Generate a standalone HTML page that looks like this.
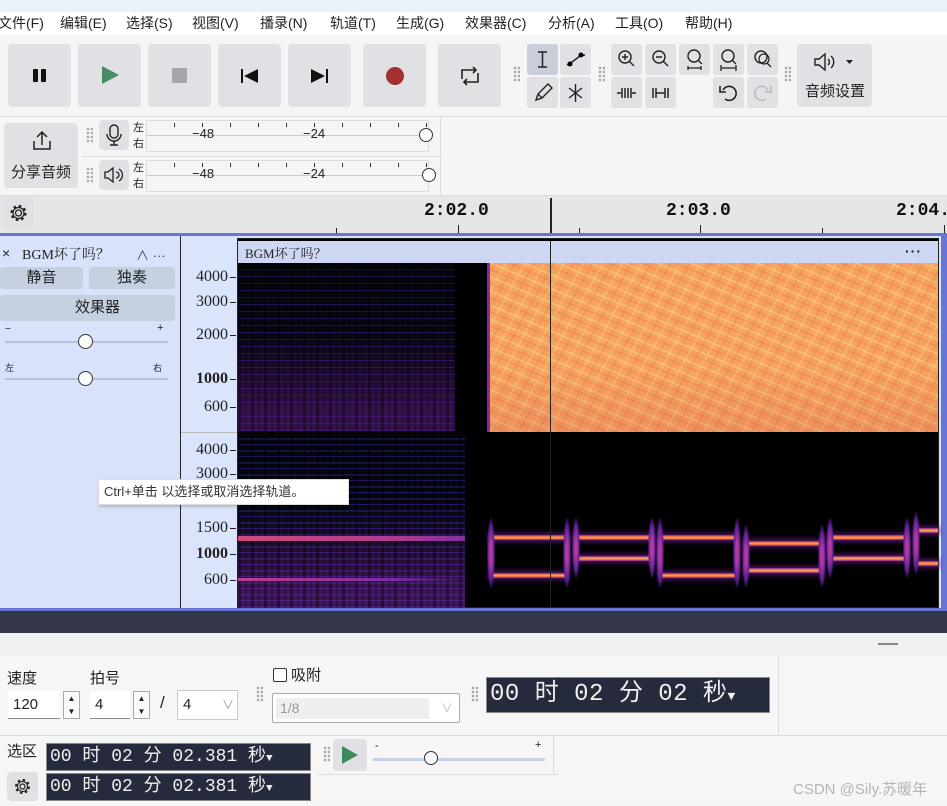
<!DOCTYPE html>
<html><head><meta charset="utf-8">
<style>
*{margin:0;padding:0;box-sizing:border-box}
body{width:947px;height:803px;overflow:hidden;background:#f5f5f5;font-family:"Liberation Sans","Noto Sans CJK SC",sans-serif;position:relative;color:#222}
.a{position:absolute}
.btn{position:absolute;background:#e1e1e5;border-radius:4px}
.sb{position:absolute;background:#e1e1e5;border-radius:3px;width:31px;height:31px}
.grip{position:absolute;width:7px;height:16px;background-image:radial-gradient(circle,#aaa 1.2px,transparent 1.5px);background-size:4px 4px}
.rl{position:absolute;right:10px;font-family:"Liberation Serif","DejaVu Serif",serif;font-size:16px;color:#222}
.rl::after{content:"";position:absolute;right:-8px;top:50%;width:6px;height:1px;background:#222}
.tl{position:absolute;font-family:"Liberation Mono","DejaVu Sans Mono",monospace;font-weight:bold;font-size:18px;color:#111}
.td{position:absolute;background:#262a3d;border:1px solid #888;color:#f0f0f0;font-family:"Liberation Mono","Noto Sans CJK SC",monospace;white-space:nowrap;overflow:hidden}
.bar{position:absolute;height:5px;background:linear-gradient(#7b2ca0,#f26b3a 30%,#fbb86a 50%,#f26b3a 70%,#7b2ca0);box-shadow:0 0 5px 2px rgba(110,30,150,.7)}
.cap{position:absolute;width:8px;background:radial-gradient(ellipse,#b53aa0 20%,#5a1f90 55%,transparent 75%)}
</style></head><body>
<div class="a" style="left:0;top:0;width:947px;height:12px;background:#eaf2f7"></div>
<div class="a" style="left:0;top:12px;width:947px;height:23px;background:#fff;font-size:14px;line-height:23px;white-space:nowrap">
<span class="a" style="left:-2px">文件(F)</span><span class="a" style="left:60px">编辑(E)</span><span class="a" style="left:126px">选择(S)</span><span class="a" style="left:192px">视图(V)</span><span class="a" style="left:260px">播录(N)</span><span class="a" style="left:330px">轨道(T)</span><span class="a" style="left:396px">生成(G)</span><span class="a" style="left:465px">效果器(C)</span><span class="a" style="left:548px">分析(A)</span><span class="a" style="left:615px">工具(O)</span><span class="a" style="left:685px">帮助(H)</span></div>

<div class="btn" style="left:8px;top:44px;width:63px;height:63px"><div class="a" style="left:25px;top:25px;width:5px;height:13px;background:#111;border-radius:1px"></div><div class="a" style="left:33px;top:25px;width:5px;height:13px;background:#111;border-radius:1px"></div></div>
<div class="btn" style="left:78px;top:44px;width:63px;height:63px"><div class="a" style="left:24px;top:22px;border-left:17px solid #4a8a64;border-top:9px solid transparent;border-bottom:9px solid transparent"></div></div>
<div class="btn" style="left:148px;top:44px;width:63px;height:63px"><div class="a" style="left:24px;top:24px;width:15px;height:15px;background:#a5a7ae"></div></div>
<div class="btn" style="left:218px;top:44px;width:63px;height:63px"><div class="a" style="left:23px;top:25px;width:2px;height:14px;background:#111"></div><div class="a" style="left:26px;top:25px;border-right:14px solid #111;border-top:7px solid transparent;border-bottom:7px solid transparent"></div></div>
<div class="btn" style="left:288px;top:44px;width:63px;height:63px"><div class="a" style="left:23px;top:25px;border-left:14px solid #111;border-top:7px solid transparent;border-bottom:7px solid transparent"></div><div class="a" style="left:38px;top:25px;width:2px;height:14px;background:#111"></div></div>
<div class="btn" style="left:363px;top:44px;width:63px;height:63px"><div class="a" style="left:23px;top:23px;width:18px;height:18px;border-radius:50%;background:#a3302f"></div></div>
<div class="btn" style="left:438px;top:44px;width:63px;height:63px"><svg class="a" style="left:21px;top:21px" width="22" height="22" viewBox="0 0 22 22" fill="none" stroke="#222" stroke-width="1.6"><path d="M3 14V5h14M14 2l3 3-3 3M19 8v9H5M8 20l-3-3 3-3"/></svg></div>
<div class="grip" style="left:513px;top:66px"></div>
<div class="sb" style="left:527px;top:44px;background:#c9ceda"><svg width="31" height="31"><path d="M11 8h9M11 23h9M15.5 8v15" stroke="#222" stroke-width="1.5"/></svg></div>
<div class="sb" style="left:560px;top:44px"><svg width="31" height="31"><path d="M7 21l5-3 8-6 5-1" stroke="#222" stroke-width="1.5" fill="none"/><circle cx="10" cy="20" r="2.5"/><circle cx="21" cy="11" r="2.5"/></svg></div>
<div class="sb" style="left:527px;top:77px"><svg width="31" height="31"><path d="M9 23l2-6 10-10 4 4-10 10z M11 17l4 4" stroke="#222" stroke-width="1.4" fill="none"/></svg></div>
<div class="sb" style="left:560px;top:77px"><svg width="31" height="31"><path d="M15.5 7v18M9 11l13 10M22 11L9 21" stroke="#222" stroke-width="1.4"/></svg></div>
<div class="grip" style="left:598px;top:66px"></div>
<div class="sb" style="left:611px;top:44px"><svg width="31" height="31"><circle cx="14" cy="13" r="6" stroke="#222" stroke-width="1.4" fill="none"/><path d="M18 17l5 5M11 13h6M14 10v6" stroke="#222" stroke-width="1.4"/></svg></div>
<div class="sb" style="left:645px;top:44px"><svg width="31" height="31"><circle cx="14" cy="13" r="6" stroke="#222" stroke-width="1.4" fill="none"/><path d="M18 17l5 5M11 13h6" stroke="#222" stroke-width="1.4"/></svg></div>
<div class="sb" style="left:679px;top:44px"><svg width="31" height="31"><circle cx="15" cy="12" r="6" stroke="#222" stroke-width="1.4" fill="none"/><path d="M19 16l4 4M9 24h13M9 22v4M22 22v4" stroke="#222" stroke-width="1.3"/></svg></div>
<div class="sb" style="left:713px;top:44px"><svg width="31" height="31"><circle cx="15" cy="12" r="6" stroke="#222" stroke-width="1.4" fill="none"/><path d="M19 16l4 4M8 24h15M8 21v6M23 21v6" stroke="#222" stroke-width="1.3"/></svg></div>
<div class="sb" style="left:747px;top:44px"><svg width="31" height="31"><circle cx="14" cy="13" r="6" stroke="#222" stroke-width="1.4" fill="none"/><circle cx="17" cy="15" r="5" stroke="#222" stroke-width="1.2" fill="none"/><path d="M20 19l4 4" stroke="#222" stroke-width="1.4"/></svg></div>
<div class="sb" style="left:611px;top:77px"><svg width="31" height="31"><path d="M6 16h4M21 16h4M11 11v10M14 11v10M17 11v10M20 11v10" stroke="#222" stroke-width="1.5"/></svg></div>
<div class="sb" style="left:645px;top:77px"><svg width="31" height="31"><path d="M8 11v10M11 11v10M20 11v10M23 11v10M11 16h9" stroke="#222" stroke-width="1.5"/></svg></div>
<div class="sb" style="left:713px;top:77px"><svg width="31" height="31"><path d="M10 13a7 7 0 1 1 2 9" stroke="#222" stroke-width="1.6" fill="none"/><path d="M7 9v6h6" stroke="#222" stroke-width="1.6" fill="none"/></svg></div>
<div class="sb" style="left:747px;top:77px"><svg width="31" height="31"><path d="M21 13a7 7 0 1 0-2 9" stroke="#bbb" stroke-width="1.6" fill="none"/><path d="M24 9v6h-6" stroke="#bbb" stroke-width="1.6" fill="none"/></svg></div>
<div class="grip" style="left:784px;top:66px"></div>
<div class="btn" style="left:797px;top:44px;width:75px;height:63px"><svg class="a" style="left:15px;top:8px" width="45" height="20"><path d="M3 7h4l6-5v16l-6-5H3z" stroke="#222" stroke-width="1.4" fill="none"/><path d="M16 7a4 4 0 0 1 0 6M19 4a8 8 0 0 1 0 12" stroke="#222" stroke-width="1.4" fill="none"/><path d="M34 8h7l-3.5 4z" fill="#222"/></svg><div class="a" style="left:8px;top:36px;font-size:15px">音频设置</div></div>
<div class="a" style="left:0;top:116px;width:947px;height:1px;background:#ddd"></div>

<div class="btn" style="left:4px;top:123px;width:74px;height:65px"><svg class="a" style="left:26px;top:6px" width="24" height="24"><path d="M4 12v8h16v-8M12 3v13M7 8l5-5 5 5" stroke="#222" stroke-width="1.5" fill="none"/></svg><div class="a" style="left:7px;top:38px;font-size:15px">分享音频</div></div>
<div class="grip" style="left:86px;top:127px"></div><div class="grip" style="left:86px;top:167px"></div>
<div class="btn" style="left:99px;top:120px;width:30px;height:30px"><svg width="30" height="30"><rect x="11" y="5" width="8" height="13" rx="4" stroke="#222" stroke-width="1.4" fill="none"/><path d="M8 14a7 7 0 0 0 14 0M15 21v4M11 25h8" stroke="#222" stroke-width="1.4" fill="none"/></svg></div>
<div class="btn" style="left:99px;top:160px;width:30px;height:30px"><svg width="30" height="30"><path d="M6 12h3l5-4v14l-5-4H6z" stroke="#222" stroke-width="1.3" fill="none"/><path d="M17 12a3 3 0 0 1 0 6M20 9a7 7 0 0 1 0 12" stroke="#222" stroke-width="1.3" fill="none"/></svg></div>
<div class="a" style="left:133px;top:120px;font-size:11px;line-height:16px">左<br>右</div>
<div class="a" style="left:133px;top:160px;font-size:11px;line-height:16px">左<br>右</div>
<div class="a" style="left:146px;top:120px;width:283px;height:32px;border:1px solid #ddd"></div>
<div class="a" style="left:146px;top:160px;width:283px;height:32px;border:1px solid #ddd"></div>
<div class="a" style="left:147px;top:135px;width:282px;height:1px;background:#ccc"></div>
<div class="a" style="left:147px;top:175px;width:282px;height:1px;background:#ccc"></div>
<div class="a" style="left:147px;top:123px;width:280px;height:4px;background:repeating-linear-gradient(90deg,transparent 0 27px,#333 27px 28px)"></div>
<div class="a" style="left:147px;top:163px;width:280px;height:4px;background:repeating-linear-gradient(90deg,transparent 0 27px,#333 27px 28px)"></div>
<div class="a" style="left:192px;top:126px;font-size:13px">−48</div><div class="a" style="left:303px;top:126px;font-size:13px">−24</div>
<div class="a" style="left:192px;top:166px;font-size:13px">−48</div><div class="a" style="left:303px;top:166px;font-size:13px">−24</div>
<div class="a" style="left:419px;top:128px;width:14px;height:14px;border:1.5px solid #333;border-radius:50%;background:#fff"></div>
<div class="a" style="left:422px;top:168px;width:14px;height:14px;border:1.5px solid #333;border-radius:50%;background:#fff"></div>
<div class="a" style="left:82px;top:156px;width:360px;height:1px;background:#ddd"></div>
<div class="a" style="left:440px;top:117px;width:1px;height:78px;background:#ddd"></div>
<div class="a" style="left:0;top:195px;width:947px;height:1px;background:#ddd"></div>

<div class="a" style="left:0;top:196px;width:947px;height:37px;background:#e6e6e6"></div>
<div class="btn" style="left:3px;top:197px;width:31px;height:32px"><svg width="31" height="32"><circle cx="15.5" cy="16" r="3" stroke="#222" stroke-width="1.3" fill="none"/><circle cx="15.5" cy="16" r="7" stroke="#222" stroke-width="2.2" stroke-dasharray="2.7 2.8" fill="none"/><circle cx="15.5" cy="16" r="5.5" stroke="#222" stroke-width="1.2" fill="none"/></svg></div>
<div class="tl" style="left:424px;top:201px">2:02.0</div>
<div class="tl" style="left:666px;top:201px">2:03.0</div>
<div class="tl" style="left:896px;top:201px">2:04.</div>
<div class="a" style="left:336px;top:228px;width:1px;height:5px;background:#222"></div>
<div class="a" style="left:458px;top:225px;width:1px;height:8px;background:#222"></div>
<div class="a" style="left:579px;top:228px;width:1px;height:5px;background:#222"></div>
<div class="a" style="left:700px;top:225px;width:1px;height:8px;background:#222"></div>
<div class="a" style="left:822px;top:228px;width:1px;height:5px;background:#222"></div>
<div class="a" style="left:944px;top:225px;width:1px;height:8px;background:#222"></div>
<div class="a" style="left:550px;top:198px;width:2px;height:35px;background:#222"></div>

<div class="a" style="left:0;top:233px;width:947px;height:378px;background:#6675d6"></div>
<div class="a" style="left:0;top:236px;width:941px;height:372px;background:#d8e3fb"></div>
<div class="a" style="left:180px;top:236px;width:1px;height:372px;background:#222"></div>
<div class="a" style="left:181px;top:236px;width:57px;height:372px;background:#dae4fa"></div>
<div class="a" style="left:181px;top:432px;width:57px;height:1px;background:#bbb"></div>
<div class="a" style="left:237px;top:238px;width:702px;height:370px;background:#000;border:1px solid #222"></div>
<div class="a" style="left:238px;top:241px;width:700px;height:22px;background:#cdd6f2"></div>
<div class="a" style="left:245px;top:243px;font-family:'Liberation Serif','Noto Serif CJK SC',serif;font-size:13px">BGM坏了吗？</div>
<div class="a" style="left:905px;top:243px;font-size:14px;font-weight:bold;letter-spacing:1px">···</div>

<div class="a" style="left:2px;top:245px;font-size:14px">×</div>
<div class="a" style="left:22px;top:244px;font-family:'Liberation Serif','Noto Serif CJK SC',serif;font-size:14px">BGM坏了吗？</div>
<div class="a" style="left:136px;top:245px;font-size:13px;color:#444">∧ ···</div>
<div class="a" style="left:0;top:267px;width:83px;height:22px;background:#c5d0e0;border-radius:3px;text-align:center;font-size:15px;line-height:22px">静音</div>
<div class="a" style="left:89px;top:267px;width:86px;height:22px;background:#c5d0e0;border-radius:3px;text-align:center;font-size:15px;line-height:22px">独奏</div>
<div class="a" style="left:0;top:295px;width:175px;height:26px;background:#c5d0e0;border-radius:3px;text-align:center;font-size:15px;line-height:26px;padding-left:20px">效果器</div>
<div class="a" style="left:5px;top:324px;font-size:10px">−</div><div class="a" style="left:157px;top:322px;font-size:11px">+</div>
<div class="a" style="left:5px;top:341px;width:163px;height:2px;background:#b8c2d2"></div>
<div class="a" style="left:78px;top:334px;width:15px;height:15px;border:1.5px solid #333;border-radius:50%;background:#fafafa"></div>
<div class="a" style="left:5px;top:361px;font-size:9px">左</div><div class="a" style="left:153px;top:361px;font-size:9px">右</div>
<div class="a" style="left:5px;top:378px;width:163px;height:2px;background:#b8c2d2"></div>
<div class="a" style="left:78px;top:371px;width:15px;height:15px;border:1.5px solid #333;border-radius:50%;background:#fafafa"></div>

<div class="a" style="left:181px;top:236px;width:57px;height:372px">
<div class="rl" style="top:32px">4000</div><div class="rl" style="top:57px">3000</div><div class="rl" style="top:90px">2000</div><div class="rl" style="top:134px;font-weight:bold">1000</div><div class="rl" style="top:162px">600</div>
<div class="rl" style="top:205px">4000</div><div class="rl" style="top:229px">3000</div><div class="rl" style="top:283px">1500</div><div class="rl" style="top:309px;font-weight:bold">1000</div><div class="rl" style="top:335px">600</div>
</div>

<!-- spectrogram -->
<div class="a" style="left:238px;top:263px;width:217px;height:168px;background:repeating-linear-gradient(180deg,#05060f 0 6px,#141a40 6px 7px,#05060f 7px 13px,#2a1560 13px 14px),#05060f"></div>
<div class="a" style="left:238px;top:263px;width:217px;height:168px;background:linear-gradient(180deg,rgba(0,0,0,.2),rgba(0,0,0,0) 40%,rgba(110,30,150,.45) 90%)"></div>
<div class="a" style="left:238px;top:263px;width:217px;height:168px;background:repeating-linear-gradient(90deg,rgba(0,0,0,.35) 0 3px,transparent 3px 7px,rgba(0,0,0,.2) 7px 9px,transparent 9px 13px)"></div>
<div class="a" style="left:487px;top:263px;width:451px;height:169px;background:#f6a45c"></div>
<div class="a" style="left:487px;top:263px;width:451px;height:169px;background:repeating-linear-gradient(23deg,rgba(255,225,160,.35) 0 2px,transparent 2px 7px,rgba(235,110,70,.3) 7px 9px,transparent 9px 13px)"></div>
<div class="a" style="left:487px;top:263px;width:451px;height:169px;background:repeating-linear-gradient(-61deg,rgba(255,225,160,.25) 0 2px,transparent 2px 9px,rgba(220,90,80,.2) 9px 11px,transparent 11px 17px)"></div>
<div class="a" style="left:487px;top:263px;width:451px;height:169px;background:linear-gradient(180deg,transparent 60%,rgba(200,70,90,.2))"></div>
<div class="a" style="left:487px;top:263px;width:3px;height:169px;background:#8a2aa0"></div>
<div class="a" style="left:238px;top:433px;width:227px;height:175px;background:repeating-linear-gradient(180deg,#05060f 0 5px,#141a48 5px 7px,#05060f 7px 11px,#2a1a70 11px 12px)"></div>
<div class="a" style="left:238px;top:433px;width:227px;height:175px;background:linear-gradient(180deg,rgba(0,0,0,.2),rgba(0,0,0,0) 40%,rgba(130,40,170,.45) 90%)"></div>
<div class="a" style="left:238px;top:433px;width:227px;height:175px;background:repeating-linear-gradient(90deg,rgba(0,0,0,.35) 0 3px,transparent 3px 7px,rgba(0,0,0,.2) 7px 9px,transparent 9px 13px)"></div>
<div class="a" style="left:238px;top:536px;width:227px;height:5px;background:linear-gradient(90deg,#d04a7a,#b03a90 70%,#8030a0)"></div>
<div class="a" style="left:238px;top:578px;width:227px;height:3px;background:linear-gradient(90deg,#c0408a,#7a2aa0 70%,transparent)"></div>

<div class="bar" style="left:490px;top:535px;width:77px"></div><div class="bar" style="left:490px;top:573px;width:77px"></div>
<div class="bar" style="left:575px;top:535px;width:77px"></div><div class="bar" style="left:575px;top:556px;width:77px"></div>
<div class="bar" style="left:660px;top:535px;width:77px"></div><div class="bar" style="left:660px;top:573px;width:77px"></div>
<div class="bar" style="left:745px;top:541px;width:77px"></div><div class="bar" style="left:745px;top:568px;width:77px"></div>
<div class="bar" style="left:830px;top:535px;width:77px"></div><div class="bar" style="left:830px;top:556px;width:77px"></div>
<div class="bar" style="left:917px;top:528px;width:21px"></div><div class="bar" style="left:917px;top:561px;width:21px"></div>
<div class="cap" style="left:487px;top:518px;height:70px"></div><div class="cap" style="left:563px;top:518px;height:70px"></div>
<div class="cap" style="left:572px;top:518px;height:60px"></div><div class="cap" style="left:648px;top:518px;height:60px"></div>
<div class="cap" style="left:656px;top:518px;height:70px"></div><div class="cap" style="left:733px;top:518px;height:70px"></div>
<div class="cap" style="left:742px;top:525px;height:62px"></div><div class="cap" style="left:818px;top:525px;height:62px"></div>
<div class="cap" style="left:826px;top:518px;height:60px"></div><div class="cap" style="left:903px;top:518px;height:60px"></div>
<div class="cap" style="left:912px;top:512px;height:62px"></div>
<div class="a" style="left:550px;top:241px;width:1px;height:367px;background:#222"></div>

<div class="a" style="left:98px;top:479px;width:251px;height:26px;background:#fff;border:1px solid #ddd;box-shadow:1px 2px 3px rgba(0,0,0,.2);font-size:13px;line-height:24px;padding-left:5px;color:#333">Ctrl+单击 以选择或取消选择轨道。</div>

<div class="a" style="left:0;top:611px;width:947px;height:22px;background:#33374a"></div>
<div class="a" style="left:0;top:633px;width:947px;height:22px;background:#f0f0f0"></div>
<div class="a" style="left:878px;top:643px;width:20px;height:2px;background:#888"></div>
<div class="a" style="left:0;top:655px;width:947px;height:148px;background:#f6f6f6"></div>
<div class="a" style="left:0;top:735px;width:947px;height:1px;background:#ddd"></div>
<div class="a" style="left:778px;top:655px;width:1px;height:80px;background:#ddd"></div>
<div class="a" style="left:7px;top:667px;font-size:15px">速度</div>
<div class="a" style="left:90px;top:667px;font-size:15px">拍号</div>
<div class="a" style="left:8px;top:691px;width:52px;height:28px;background:#fff;border-bottom:1px solid #888;font-size:15px;line-height:27px;padding-left:5px">120</div>
<div class="a" style="left:63px;top:691px;width:17px;height:28px;border:1px solid #aaa;background:#fafafa;font-size:8px;line-height:13px;text-align:center">▲<br>▼</div>
<div class="a" style="left:90px;top:691px;width:40px;height:28px;background:#fff;border-bottom:1px solid #888;font-size:15px;line-height:27px;padding-left:5px">4</div>
<div class="a" style="left:133px;top:691px;width:17px;height:28px;border:1px solid #aaa;background:#fafafa;font-size:8px;line-height:13px;text-align:center">▲<br>▼</div>
<div class="a" style="left:160px;top:693px;font-size:17px">/</div>
<div class="a" style="left:177px;top:690px;width:61px;height:30px;background:#fff;border:1px solid #ccc;font-size:15px;line-height:28px;padding-left:5px">4<span class="a" style="left:44px;color:#999;font-size:12px">∨</span></div>
<div class="grip" style="left:256px;top:686px"></div>
<div class="a" style="left:273px;top:668px;width:14px;height:14px;border:1px solid #333;border-radius:2px;background:#fff"></div>
<div class="a" style="left:291px;top:664px;font-size:15px">吸附</div>
<div class="a" style="left:272px;top:693px;width:188px;height:30px;background:#fff;border:1px solid #aaa;border-radius:2px"><div class="a" style="left:3px;top:4px;width:153px;height:21px;background:#efefef;color:#999;font-size:14px;line-height:21px;padding-left:4px">1/8</div><span class="a" style="left:168px;top:5px;color:#bbb;font-size:12px">∨</span></div>
<div class="grip" style="left:471px;top:686px"></div>
<div class="td" style="left:486px;top:677px;width:284px;height:36px;font-size:24px;line-height:34px;padding-left:3px;letter-spacing:0.5px">00 时 02 分 02 秒<span style="font-size:13px">▼</span></div>

<div class="a" style="left:7px;top:740px;font-size:15px">选区</div>
<div class="td" style="left:46px;top:743px;width:265px;height:28px;font-size:18px;line-height:26px;padding-left:3px;letter-spacing:0">00 时 02 分 02.381 秒<span style="font-size:11px">▼</span></div>
<div class="td" style="left:46px;top:773px;width:265px;height:28px;font-size:18px;line-height:26px;padding-left:3px;letter-spacing:0">00 时 02 分 02.381 秒<span style="font-size:11px">▼</span></div>
<div class="btn" style="left:7px;top:772px;width:31px;height:29px"><svg width="31" height="29"><circle cx="15.5" cy="14.5" r="2.5" stroke="#222" stroke-width="1.2" fill="none"/><circle cx="15.5" cy="14.5" r="6.5" stroke="#222" stroke-width="2" stroke-dasharray="2.5 2.6" fill="none"/><circle cx="15.5" cy="14.5" r="5" stroke="#222" stroke-width="1.1" fill="none"/></svg></div>
<div class="grip" style="left:323px;top:746px"></div>
<div class="btn" style="left:333px;top:739px;width:34px;height:32px"><div class="a" style="left:9px;top:7px;border-left:16px solid #3f8a5c;border-top:9px solid transparent;border-bottom:9px solid transparent"></div></div>
<div class="a" style="left:375px;top:740px;font-size:11px">-</div><div class="a" style="left:535px;top:739px;font-size:11px">+</div>
<div class="a" style="left:373px;top:758px;width:172px;height:3px;background:#c8d2e0"></div>
<div class="a" style="left:424px;top:751px;width:14px;height:14px;border:1.5px solid #333;border-radius:50%;background:#fafafa"></div>
<div class="a" style="left:553px;top:736px;width:1px;height:38px;background:#ddd"></div>
<div class="a" style="left:318px;top:774px;width:240px;height:1px;background:#ddd"></div>
<div class="a" style="left:793px;top:778px;font-size:15px;color:#b5b5b5">CSDN @Sily.苏暖年</div>
</body></html>
